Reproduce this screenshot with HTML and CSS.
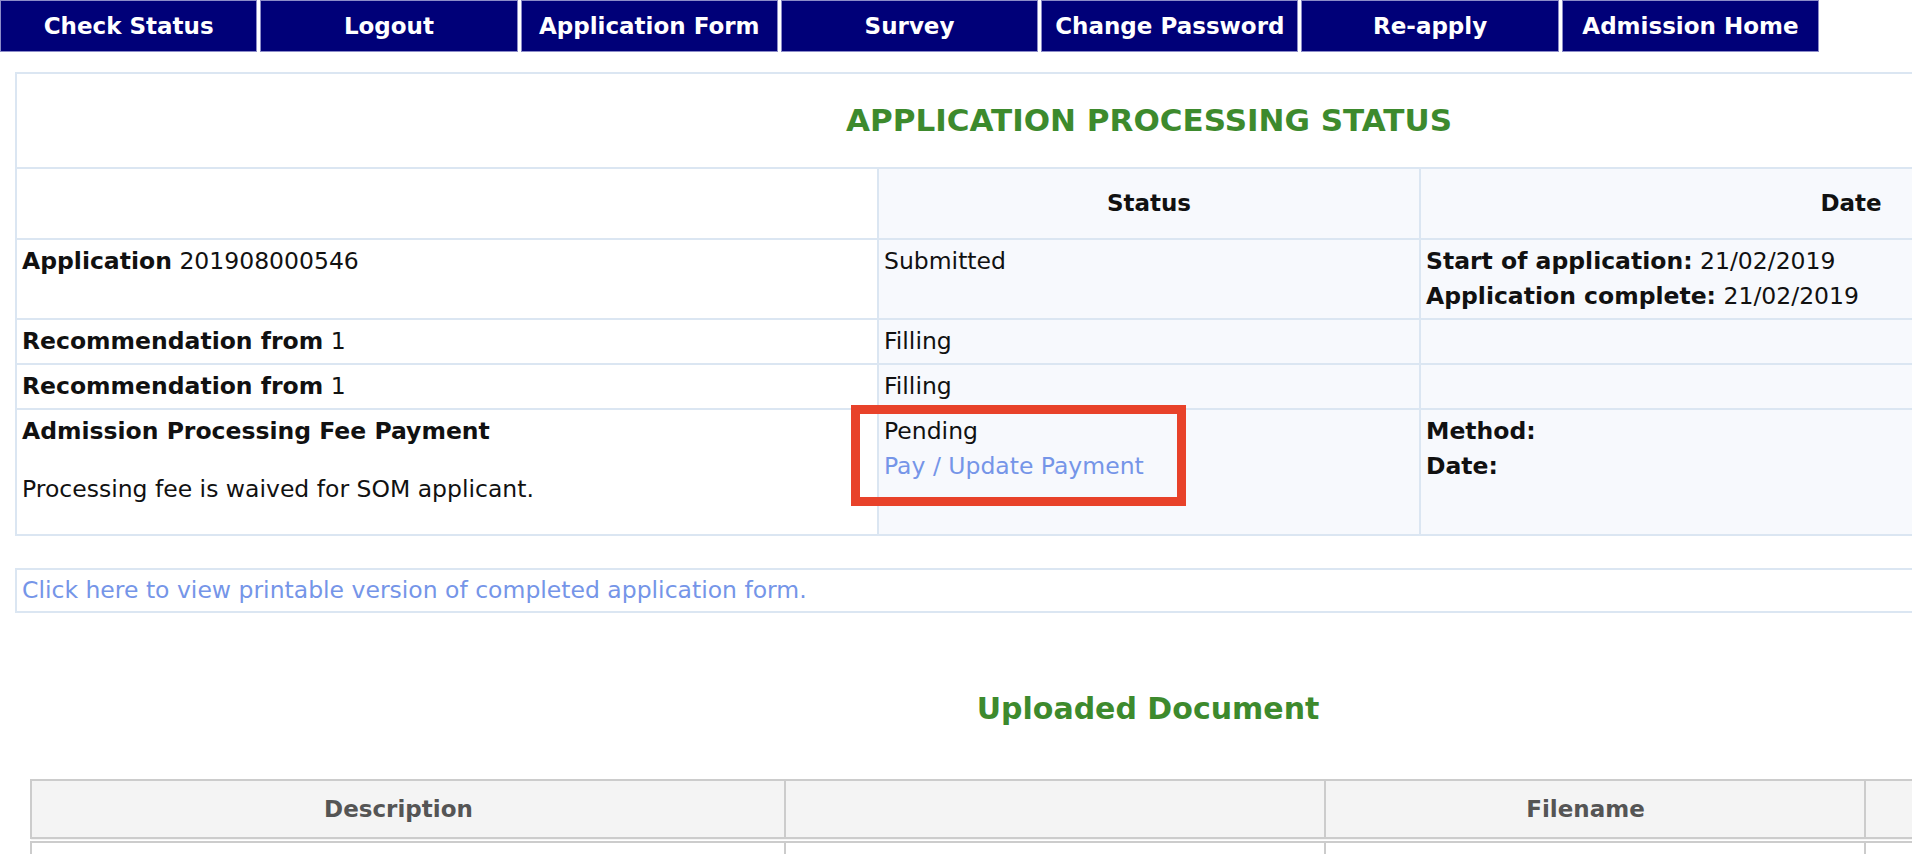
FILE: index.html
```html
<!DOCTYPE html>
<html>
<head>
<meta charset="utf-8">
<title>Application Processing Status</title>
<link rel="stylesheet" href="styles.css">
</head>
<body>
<nav class="topnav">
  <a class="navbtn" href="#">Check Status</a>
  <a class="navbtn" href="#">Logout</a>
  <a class="navbtn" href="#">Application Form</a>
  <a class="navbtn" href="#">Survey</a>
  <a class="navbtn" href="#">Change Password</a>
  <a class="navbtn" href="#">Re-apply</a>
  <a class="navbtn" href="#">Admission Home</a>
</nav>

<div class="content">
  <table class="status-table">
    <colgroup>
      <col class="c1"><col class="c2"><col class="c3">
    </colgroup>
    <tr>
      <td colspan="3" class="title-cell">APPLICATION PROCESSING STATUS</td>
    </tr>
    <tr class="head-row">
      <th class="blank"></th>
      <th class="shade">Status</th>
      <th class="shade">Date</th>
    </tr>
    <tr>
      <td><b>Application</b> 201908000546</td>
      <td class="shade">Submitted</td>
      <td class="shade"><b>Start of application:</b> 21/02/2019<br><b>Application complete:</b> 21/02/2019</td>
    </tr>
    <tr>
      <td><b>Recommendation from</b> 1</td>
      <td class="shade">Filling</td>
      <td class="shade"></td>
    </tr>
    <tr>
      <td><b>Recommendation from</b> 1</td>
      <td class="shade">Filling</td>
      <td class="shade"></td>
    </tr>
    <tr>
      <td><b>Admission Processing Fee Payment</b><p class="note">Processing fee is waived for SOM applicant.</p></td>
      <td class="shade">Pending<br><a class="link" href="#">Pay / Update Payment</a></td>
      <td class="shade"><b>Method:</b><br><b>Date:</b></td>
    </tr>
  </table>

  <div class="print-box"><a class="link" href="#">Click here to view printable version of completed application form.</a></div>

  <h2 class="section-title">Uploaded Document</h2>

  <table class="doc-table">
    <colgroup>
      <col class="d1"><col class="d2"><col class="d3"><col class="d4">
    </colgroup>
    <tr>
      <th>Description</th>
      <th></th>
      <th>Filename</th>
      <th></th>
    </tr>
    <tr class="doc-row">
      <td></td><td></td><td></td><td></td>
    </tr>
  </table>
</div>

<div class="highlight"></div>
</body>
</html>
```

FILE: styles.css
```css
html, body {
  margin: 0;
  padding: 0;
}
body {
  position: relative;
  width: 1912px;
  height: 854px;
  overflow: hidden;
  background: #ffffff;
  font-family: "DejaVu Sans", Verdana, sans-serif;
  font-size: 23.5px;
  color: #111111;
}

.topnav {
  display: flex;
  gap: 3px;
  height: 52px;
}
.navbtn {
  box-sizing: border-box;
  width: 257.3px;
  height: 52px;
  display: flex;
  align-items: center;
  justify-content: center;
  background: #000078;
  border: 1px solid #8c8cc8;
  color: #ffffff;
  font-weight: bold;
  font-size: 23px;
  text-decoration: none;
  white-space: nowrap;
}

.content {
  margin-left: 15px;
  margin-top: 20px;
  width: 2266px;
}

.status-table {
  width: 2266px;
  table-layout: fixed;
  border-collapse: collapse;
  border: 2px solid #dbe6f2;
  line-height: 35px;
}
.status-table .c1 { width: 862px; }
.status-table .c2 { width: 542px; }
.status-table .c3 { width: 862px; }
.status-table td,
.status-table th {
  border: 2px solid #dbe6f2;
  padding: 4px 5px;
  vertical-align: top;
  text-align: left;
}
.status-table .shade {
  background: #f7f9fd;
}
.title-cell {
  height: 85px;
  vertical-align: middle !important;
  text-align: center !important;
  color: #3d8a2d;
  font-weight: bold;
  font-size: 31px;
  background: #ffffff;
}
.head-row th {
  height: 61px;
  vertical-align: middle;
  text-align: center;
  font-weight: bold;
  font-size: 23px;
}
.head-row .blank {
  background: #ffffff;
}
.note {
  margin: 23px 0;
}
.link {
  color: #7595e8;
  text-decoration: none;
}

.print-box {
  margin-top: 32px;
  box-sizing: border-box;
  width: 2266px;
  border: 2px solid #dbe6f2;
  padding: 3px 5px;
  line-height: 35px;
}

.section-title {
  margin: 78px 0 52px 0;
  text-align: center;
  font-size: 30px;
  line-height: 36px;
  font-weight: bold;
  color: #3d8a2d;
}

.doc-table {
  width: 2235px;
  margin: 0 auto;
  table-layout: fixed;
  border-collapse: collapse;
  border: 2px solid #cccccc;
}
.doc-table .d1 { width: 754px; }
.doc-table .d2 { width: 540px; }
.doc-table .d3 { width: 540px; }
.doc-table .d4 { width: 401px; }
.doc-table th {
  height: 56px;
  background: #f4f4f4;
  color: #555555;
  font-weight: bold;
  font-size: 23px;
  text-align: center;
  padding: 0 18px 0 0;
  border: 2px solid #cccccc;
  border-bottom: 6px double #cccccc;
}
.doc-table td {
  height: 40px;
  border: 2px solid #cccccc;
}

.highlight {
  position: absolute;
  left: 851px;
  top: 405px;
  width: 317px;
  height: 83px;
  border: 9px solid #e8422a;
}
```
